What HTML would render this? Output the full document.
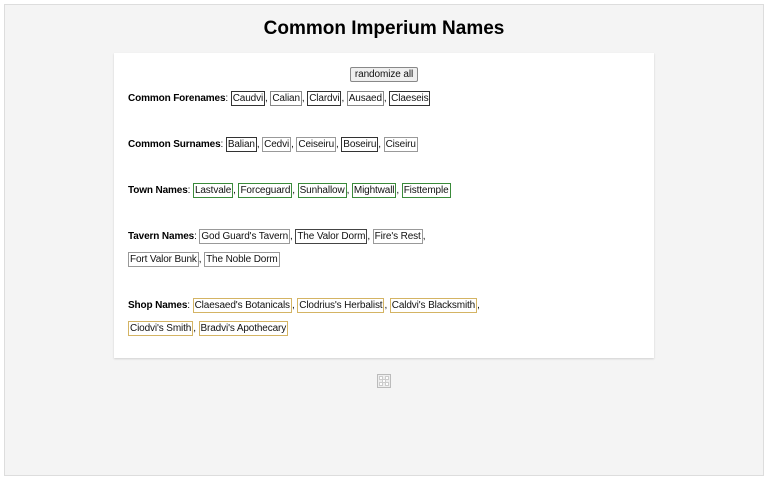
<!DOCTYPE html>
<html><head><style>
body{margin:0;width:768px;height:480px;background:#fff;font-family:"Liberation Sans",sans-serif;position:relative;overflow:hidden}
.outer{position:absolute;left:4px;top:4px;width:758px;height:470px;background:#f4f4f4;border:1px solid #ddd}
h1{position:absolute;left:0;width:768px;top:18px;margin:0;text-align:center;font-size:19px;font-weight:bold;color:#000}
.card{position:absolute;left:114px;top:53px;width:540px;height:305px;background:#fff;box-shadow:0 1px 2px rgba(0,0,0,.15)}
.btn{position:absolute;left:236px;top:14px;width:66px;height:13px;border:1px solid #888;border-radius:2px;background:#efefef;font-size:10px;letter-spacing:-0.1px;line-height:13px;text-align:center;color:#111}
.row{position:absolute;left:14px;font-size:10px;letter-spacing:-0.13px;color:#111;white-space:nowrap;line-height:15px}
.row b{color:#000}
.row span{display:inline-block;border:1px solid #333;padding:0 1px;line-height:13px}
.t span{border-color:#999}
.s span{border-color:#d4b464}
.gr span{border-color:#3a8a3a}
.dice{position:absolute;left:377px;top:374px;width:12px;height:12px;border:1px solid #bbb;background:#eee}
.dice i{position:absolute;width:2px;height:2px;background:#fff;border:1px solid #ccc}
</style></head><body>
<div class="outer"></div>
<h1>Common Imperium Names</h1>
<div class="card">
<div class="btn">randomize all</div>
<div class="row" style="top:38px"><b>Common Forenames</b>: <span>Caudvi</span>, <span style="border-color:#888">Calian</span>, <span>Clardvi</span>, <span style="border-color:#888">Ausaed</span>, <span>Claeseis</span></div>
<div class="row" style="top:84px"><b>Common Surnames</b>: <span>Balian</span>, <span style="border-color:#999">Cedvi</span>, <span style="border-color:#999">Ceiseiru</span>, <span>Boseiru</span>, <span style="border-color:#999">Ciseiru</span></div>
<div class="row gr" style="top:130px"><b>Town Names</b>: <span>Lastvale</span>, <span>Forceguard</span>, <span>Sunhallow</span>, <span>Mightwall</span>, <span>Fisttemple</span></div>
<div class="row t" style="top:176px"><b>Tavern Names</b>: <span>God Guard's Tavern</span>, <span style="border-color:#444">The Valor Dorm</span>, <span>Fire's Rest</span>,</div>
<div class="row t" style="top:199px"><span>Fort Valor Bunk</span>, <span>The Noble Dorm</span></div>
<div class="row s" style="top:245px"><b>Shop Names</b>: <span>Claesaed's Botanicals</span>, <span>Clodrius's Herbalist</span>, <span>Caldvi's Blacksmith</span>,</div>
<div class="row s" style="top:268px"><span>Ciodvi's Smith</span>, <span>Bradvi's Apothecary</span></div>
</div>
<div class="dice"><i style="left:1px;top:1px"></i><i style="left:7px;top:1px"></i><i style="left:4px;top:4px"></i><i style="left:1px;top:7px"></i><i style="left:7px;top:7px"></i></div>
</body></html>
